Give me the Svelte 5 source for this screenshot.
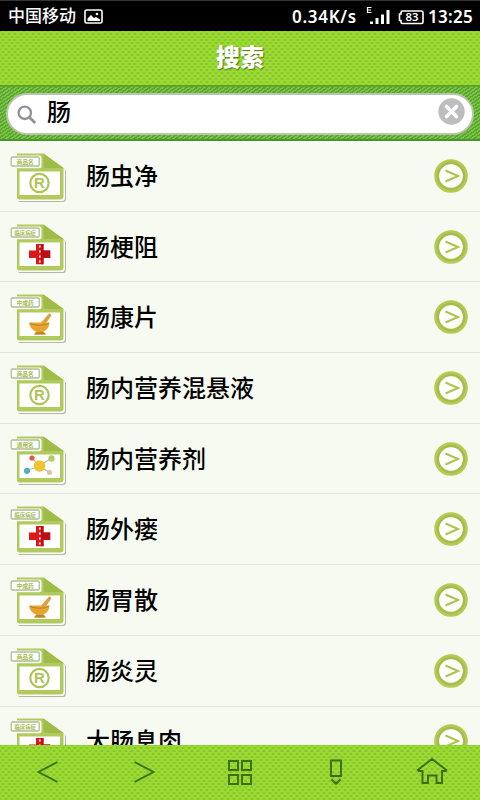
<script>
  const items = [
    { name: "肠虫净", kind: "brand" },
    { name: "肠梗阻", kind: "disease" },
    { name: "肠康片", kind: "herbal" },
    { name: "肠内营养混悬液", kind: "brand" },
    { name: "肠内营养剂", kind: "generic" },
    { name: "肠外瘘", kind: "disease" },
    { name: "肠胃散", kind: "herbal" },
    { name: "肠炎灵", kind: "brand" },
    { name: "大肠息肉", kind: "disease" },
  ];

  const labels = {
    brand: "商品名",
    disease: "临床病症",
    herbal: "中成药",
    generic: "通用名",
  };

  let query = $state("肠");
</script>

<div class="phone">
  <div class="status">
    <span class="carrier">中国移动</span>
    <svg class="photo" width="20" height="16" viewBox="0 0 20 16">
      <rect x="1" y="1" width="17" height="13" rx="1.5" fill="none" stroke="#fff" stroke-width="1.6" />
      <path d="M3.500 12V9.500L7 6l3 3 2-1 4 2.500V12z" fill="#fff" />
      <circle cx="13" cy="5" r="1.3" fill="#fff" />
    </svg>
    <span class="speed">0.34K/s</span>
    <svg class="signal" width="24" height="20" viewBox="0 0 24 20">
      <path d="M5.500 1.500H1.500V6.500H5.500M1.500 4H5" fill="none" stroke="#fff" stroke-width="1.2" />
      <path d="M4 15.500h3v2.500H4zM9.500 12h3v6h-3zM15 8.500h3V18h-3zM20.500 4h3v14h-3z" fill="#fff" />
    </svg>
    <span class="battery">
      <svg width="26" height="15" viewBox="0 0 26 15">
        <path d="M4.500 1H23.500Q25 1 25 2.500V12Q25 13.500 23.500 13.500H4.500Q3 13.500 3 12V10.500H1.500V4H3V2.500Q3 1 4.500 1Z" fill="none" stroke="#fff" stroke-width="1.6" />
        <text x="14" y="11.300" text-anchor="middle" textLength="13" lengthAdjust="spacingAndGlyphs">83</text>
      </svg>
    </span>
    <span class="clock">13:25</span>
  </div>

  <header class="weave"><h1>搜索</h1></header>

  <div class="search">
    <label>
      <svg class="lens" width="20" height="20" viewBox="0 0 20 20" fill="none" stroke="#929292">
        <circle cx="7.800" cy="7.800" r="6.200" stroke-width="2.300" />
        <path d="M12.500 12.500L18.300 18" stroke-width="2.800" />
      </svg>
      <input bind:value={query} aria-label="搜索" />
      <button class="clear" aria-label="清除" onclick={() => (query = "")}>
        <svg width="27" height="27" viewBox="0 0 27 27">
          <circle cx="13.500" cy="13.500" r="13.200" fill="#bdbdbd" />
          <path d="M8.500 8.500l10 10M18.500 8.500l-10 10" stroke="#fff" stroke-width="3.600" stroke-linecap="round" />
        </svg>
      </button>
    </label>
  </div>

  <ul>
    {#each items as item}
      <li>
        <svg class="file" width="60" height="52" viewBox="0 0 60 52">
          <path d="M53 15L56 18V46Q56 49 53 49H10Q8 49 8 47Z" fill="#b4b7a8" />
          <path d="M7 1H33L55 17V44.500Q55 48 52 48H9Q7 48 7 46Z" fill="#fff" />
          <path d="M7 0.500H33.500L53.500 15V43.500Q53.500 46.500 50.500 46.500H9Q7 46.500 7 44.500Z" fill="#b0ca5c" />
          <path d="M33.500 0.500V12.500Q33.500 15 36 15H53.500Z" fill="#9fbc49" />
          <rect x="9.500" y="18.500" width="40.500" height="23.500" fill="#fff" />
          <rect x="0" y="2.500" width="31.500" height="12.800" rx="2" fill="#fcfdf8" />
          <rect x="1.200" y="4" width="28" height="9" rx="1" fill="#fff" stroke="#b0bd94" stroke-width="1.300" />
          <text class="tag" x="15.200" y="10.700" text-anchor="middle" font-size={item.kind === "disease" ? 5.4 : 5.8}>{labels[item.kind]}</text>
          {#if item.kind === "brand"}
            <circle cx="29.500" cy="30" r="9.200" fill="none" stroke="#afc457" stroke-width="2.200" />
            <text class="reg" x="29.500" y="35.200" text-anchor="middle">R</text>
          {:else if item.kind === "disease"}
            <path d="M26 20h7.500v6.500h6.700v7.500h-6.700v6.300H26V34h-7v-7.500h7z" fill="#de1718" />
            <path d="M33.500 26.500h6.700V34h-6.700v6.300H31V20h2.500z" fill="#b90f17" />
            <path d="M29.800 21.500v17.500" stroke="#fff" stroke-width="1.600" stroke-dasharray="2 3" />
          {:else if item.kind === "herbal"}
            <path d="M29 31L39 19.500Q41.500 19 41 22L34 32Z" fill="#dda03a" />
            <path d="M19 28.500H39.500Q39 35.500 33 38L35 40.500H24L26.500 38Q20 35.500 19 28.500Z" fill="#e8a52e" />
            <path d="M20 29.500Q29 33 39 29.500" fill="none" stroke="#bb7e22" stroke-width="1" />
            <path d="M26 38H34L36 40.500H24Z" fill="#bd852b" />
          {:else}
            <path d="M22 22l7.500 8 12-8M17 34.500L29.500 30l10 6.500" fill="none" stroke="#b8bd8c" stroke-width="1.100" />
            <circle cx="29.500" cy="30" r="5.800" fill="#f2c332" />
            <circle cx="22" cy="22" r="2.600" fill="#dc5a47" />
            <circle cx="41.500" cy="22.500" r="3.200" fill="#b4cc63" />
            <circle cx="17" cy="34.800" r="3.100" fill="#55b1bf" />
            <circle cx="39.500" cy="36.500" r="2.500" fill="#e9bda2" />
          {/if}
        </svg>
        <span class="name">{item.name}</span>
        <svg class="go" width="34" height="34" viewBox="0 0 34 34">
          <circle cx="17" cy="17" r="14.300" fill="#fff" stroke="#b4cb4d" stroke-width="5" />
          <circle cx="17" cy="17" r="13.300" fill="none" stroke="#a4bb55" stroke-width="2" />
          <path d="M11.500 11.500L24 17l-12.500 5.500" fill="none" stroke="#adc44d" stroke-width="2.100" />
        </svg>
      </li>
    {/each}
  </ul>

  <nav class="weave">
    <button aria-label="后退">
      <svg width="34" height="34" viewBox="0 0 34 34"><path d="M26.500 7L7.500 17l19 10" /></svg>
    </button>
    <button aria-label="前进">
      <svg width="34" height="34" viewBox="0 0 34 34"><path d="M7.500 7l19 10-19 10" /></svg>
    </button>
    <button aria-label="菜单">
      <svg width="34" height="34" viewBox="0 0 34 34"><path d="M6 6h9v9H6zM19 6h9v9h-9zM6 20h9v9H6zM19 20h9v9h-9z" /></svg>
    </button>
    <button aria-label="编辑">
      <svg width="34" height="34" viewBox="0 0 34 34"><path d="M12 5.500h10v15.500H12zM12.500 24.500l4.500 4.300 4.500-4.300" /></svg>
    </button>
    <button aria-label="主页">
      <svg width="34" height="34" viewBox="0 0 34 34"><path d="M2 15.500L17 4l15 11.500M3 16h4.500v12h5.500v-7.500h8.500V28H27V16h4.500" /></svg>
    </button>
  </nav>
</div>

<style>
  :global(body) {
    margin: 0;
  }

  .phone {
    width: 480px;
    height: 800px;
    display: flex;
    flex-direction: column;
    overflow: hidden;
    background: #f7faf1;
    font-family: "Liberation Sans", "Noto Sans CJK SC", sans-serif;
  }

  .status {
    height: 31px;
    flex: none;
    display: flex;
    align-items: center;
    box-sizing: border-box;
    padding: 1px 7px 0 8px;
    border-top: 1px solid #333;
    background: #000;
    color: #fff;
    font-family: "Noto Sans", "Noto Sans CJK SC", sans-serif;
    font-weight: 600;
  }

  .carrier {
    font: 500 17px "Noto Sans CJK SC", sans-serif;
    line-height: 28px;
    width: 76px;
    white-space: nowrap;
    margin-top: -4px;
  }

  .speed {
    margin-left: auto;
    font-size: 17px;
    letter-spacing: 0.7px;
  }

  .signal {
    margin: -1px 8px 0 9px;
  }

  .battery {
    display: flex;
    margin-top: 2px;
  }

  .battery text {
    font-size: 11px;
    fill: #fff;
  }

  .clock {
    margin-left: 4px;
    font-size: 17px;
    letter-spacing: 0.3px;
  }

  .photo {
    margin-top: 1px;
  }

  .weave {
    background-color: #9cda33;
    background-image:
      radial-gradient(ellipse 2.2px 1.1px at 50% 50%, #86c72b 60%, transparent),
      radial-gradient(ellipse 2.2px 1.1px at 50% 50%, #86c72b 60%, transparent);
    background-size: 6px 6px;
    background-position: 0 0, 3px 3px;
  }

  header {
    height: 54px;
    flex: none;
    display: flex;
    align-items: center;
    justify-content: center;
  }

  h1 {
    margin: 0;
    font-size: 24px;
    line-height: 36px;
    font-weight: 900;
    color: #fff;
    text-shadow: 1px 1px 1px #507b18;
  }

  .search {
    height: 56px;
    flex: none;
    box-sizing: border-box;
    padding: 6px 6px 6px;
    border-top: 2px solid #62a323;
    border-bottom: 2px solid #4c9130;
    background: repeating-linear-gradient(145deg, #78c443 0 1.5px, #5ca532 1.5px 3px);
  }

  label {
    height: 42px;
    box-sizing: border-box;
    display: flex;
    align-items: center;
    padding: 0 7px 0 9px;
    border: 2px solid #b8c6ae;
    border-radius: 21px;
    background: #fff;
  }

  .lens {
    margin-top: 1px;
  }

  input {
    flex: 1;
    min-width: 0;
    height: 36px;
    padding: 0;
    margin: -8px 0 0 10px;
    border: 0;
    outline: 0;
    background: none;
    color: #000;
    font: 500 24px "Noto Sans CJK SC", sans-serif;
  }

  button {
    padding: 0;
    border: 0;
    background: none;
    display: flex;
    align-items: center;
    justify-content: center;
  }

  .clear {
    margin-top: -6px;
  }

  ul {
    flex: 1;
    min-height: 0;
    margin: 0;
    padding: 0;
    overflow: hidden;
    list-style: none;
  }

  li {
    height: 70.7px;
    box-sizing: border-box;
    display: flex;
    align-items: center;
    padding: 0 12px 0 10px;
    border-bottom: 1px solid #e2e7df;
  }

  .file {
    margin-top: 6px;
  }

  .tag {
    fill: #a3bd55;
    font-family: "Noto Sans CJK SC", sans-serif;
    font-weight: 700;
  }

  .reg {
    fill: #afc457;
    font-size: 15px;
    font-weight: 700;
  }

  .name {
    flex: 1;
    margin: -2px 0 0 16px;
    color: #000;
    font: 500 24px "Noto Sans CJK SC", sans-serif;
    line-height: 36px;
  }

  nav {
    height: 55px;
    flex: none;
    display: flex;
  }

  nav button {
    flex: 1;
    padding-bottom: 2px;
  }

  nav svg {
    fill: none;
    stroke: #3f6d12;
    stroke-width: 1.9;
  }
</style>
